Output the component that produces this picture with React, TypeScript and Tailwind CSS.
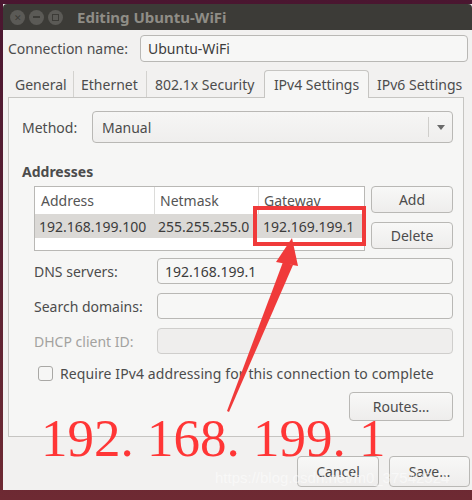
import React from "react";

const font = { fontFamily: '"Noto Sans", "Open Sans", sans-serif' };

function Btn({ children, className = "" }: { children: React.ReactNode; className?: string }) {
  return (
    <div
      className={
        "flex items-center justify-center rounded-[4px] border border-[#b9b8b5] bg-gradient-to-b from-[#f8f8f7] to-[#eeedec] text-[14px] text-[#4c4c4c] " +
        className
      }
    >
      {children}
    </div>
  );
}

function Field({ children, disabled = false, className = "" }: { children?: React.ReactNode; disabled?: boolean; className?: string }) {
  return (
    <div
      className={
        "flex items-center rounded-[4px] border px-[7px] text-[14px] " +
        (disabled ? "border-[#cfcecc] bg-[#efeeed]" : "border-[#b9b8b5] bg-[#f7f7f6] text-[#3c3c3c]") +
        " " +
        className
      }
    >
      {children}
    </div>
  );
}

export default function App() {
  return (
    <div
      className="relative h-[500px] w-[472px] overflow-hidden bg-gradient-to-b from-[#4a1630] to-[#6e2a33] pl-[3px] pt-[4px]"
      style={font}
    >
      <div className="flex h-[486px] w-[469px] flex-col bg-[#f2f1f0]">
        {/* title bar */}
        <div className="flex h-[26px] items-center rounded-t-[4px] bg-[#3c3b37] pl-[7px]">
          <div className="flex gap-[4px]">
            <div className="flex h-[15px] w-[15px] items-center justify-center rounded-full bg-[#5b5a56] text-[9px] leading-none text-[#3c3b37]">✕</div>
            <div className="flex h-[15px] w-[15px] items-center justify-center rounded-full bg-[#5b5a56]">
              <div className="h-[2px] w-[7px] bg-[#3c3b37]" />
            </div>
            <div className="flex h-[15px] w-[15px] items-center justify-center rounded-full bg-[#5b5a56]">
              <div className="h-[7px] w-[7px] border-[1.5px] border-[#3c3b37]" />
            </div>
          </div>
          <div className="ml-[14px] text-[15px] font-bold text-[#8f8d86]">Editing Ubuntu-WiFi</div>
        </div>

        {/* connection name */}
        <div className="mt-[5px] flex h-[27px] items-center pr-[4px]">
          <div className="ml-[5px] w-[132px] text-[14px] text-[#4c4c4c]">Connection name:</div>
          <Field className="h-[27px] flex-1">Ubuntu-WiFi</Field>
        </div>

        {/* tabs */}
        <div className="ml-[5px] mt-[8px] flex h-[27px] items-end text-[14px] text-[#4c4c4c]">
          <div className="flex h-[26px] w-[66px] items-center border-r border-[#d3d2cf] pl-[7px]">General</div>
          <div className="flex h-[26px] w-[73px] items-center border-r border-[#d3d2cf] pl-[7px]">Ethernet</div>
          <div className="flex h-[26px] w-[117px] items-center pl-[8px]">802.1x Security</div>
          <div className="relative z-10 -mb-px flex h-[28px] w-[105px] items-center justify-center rounded-t-[4px] border border-b-0 border-[#c6c5c2] bg-[#f6f6f5]">
            IPv4 Settings
          </div>
          <div className="flex h-[26px] w-[100px] items-center pl-[8px]">IPv6 Settings</div>
        </div>

        {/* panel */}
        <div className="ml-[5px] flex h-[340px] w-[456px] flex-col border border-[#c6c5c2] bg-[#f6f6f5] pl-[13px] pr-[10px] text-[14px] text-[#4c4c4c]">
          <div className="mt-[13px] flex h-[32px] items-center">
            <div className="w-[70px]">Method:</div>
            <div className="flex h-[32px] flex-1 items-center rounded-[4px] border border-[#b9b8b5] bg-gradient-to-b from-[#f6f6f5] to-[#efeeed] pl-[9px]">
              <span className="flex-1">Manual</span>
              <div className="flex h-[20px] w-[24px] items-center justify-center border-l border-[#cfcecb]">
                <div className="h-0 w-0 border-l-[4px] border-r-[4px] border-t-[5px] border-l-transparent border-r-transparent border-t-[#6a6a6a]" />
              </div>
            </div>
          </div>

          <div className="mt-[20px] text-[14px] font-bold leading-[18px]">Addresses</div>

          <div className="ml-[12px] mt-[5px] flex">
            <div className="flex h-[65px] w-[331px] flex-col border border-[#b9b8b5] bg-white">
              <div className="flex h-[27px] text-[#555]">
                <div className="flex w-[120px] items-center border-r border-[#dcdcda] pl-[6px]">Address</div>
                <div className="flex w-[104px] items-center border-r border-[#dcdcda] pl-[5px]">Netmask</div>
                <div className="flex flex-1 items-center pl-[5px]">Gateway</div>
              </div>
              <div className="flex h-[24px] bg-[#dbd9d6] text-[#3c3c3c]">
                <div className="flex w-[120px] items-center pl-[4px]">192.168.199.100</div>
                <div className="flex w-[104px] items-center pl-[3px]">255.255.255.0</div>
                <div className="flex flex-1 items-center pl-[4px]">192.169.199.1</div>
              </div>
            </div>
            <div className="ml-[6px] flex flex-1 flex-col gap-[9px]">
              <Btn className="h-[27px]">Add</Btn>
              <Btn className="h-[27px]">Delete</Btn>
            </div>
          </div>

          <div className="ml-[12px] mt-[7px] flex flex-col gap-[9px]">
            <div className="flex h-[26px] items-center">
              <div className="w-[123px]">DNS servers:</div>
              <Field className="h-[26px] flex-1">192.168.199.1</Field>
            </div>
            <div className="flex h-[26px] items-center">
              <div className="w-[123px]">Search domains:</div>
              <Field className="h-[26px] flex-1" />
            </div>
            <div className="flex h-[26px] items-center">
              <div className="w-[123px] text-[#a3a29f]">DHCP client ID:</div>
              <Field disabled className="h-[26px] flex-1" />
            </div>
          </div>

          <div className="ml-[16px] mt-[10px] flex h-[18px] items-center">
            <div className="h-[15px] w-[15px] rounded-[3px] border border-[#a9a8a5] bg-[#f6f6f5]" />
            <div className="ml-[7px] tracking-[0.1px]">Require IPv4 addressing for this connection to complete</div>
          </div>

          <div className="mt-[10px] flex justify-end">
            <Btn className="h-[29px] w-[104px]">Routes…</Btn>
          </div>
        </div>

        {/* bottom buttons */}
        <div className="mt-[19px] flex justify-end gap-[10px] pr-[2px]">
          <Btn className="h-[31px] w-[82px]">Cancel</Btn>
          <Btn className="h-[31px] w-[81px]">Save…</Btn>
        </div>
      </div>

      {/* annotations */}
      <div className="absolute left-[253px] top-[206px] h-[40px] w-[113px] border-[4px] border-[#f03a3a]" />
      <svg className="absolute left-0 top-0" width="472" height="500" viewBox="0 0 472 500">
        <polygon points="292,238 276,262 298,266" fill="#f03a3a" />
        <polygon points="283,262 293,265 229,412 227,411" fill="#f03a3a" />
      </svg>
      <div
        className="absolute left-[41px] top-[412px] text-[53px] leading-none text-[#ff3636]"
        style={{ fontFamily: '"Liberation Serif", "DejaVu Serif", serif' }}
      >
        192. 168. 199. 1
      </div>
      <div
        className="absolute left-[215px] top-[470px] text-[15px] leading-none text-white/50"
        style={{ fontFamily: '"Liberation Sans", sans-serif' }}
      >
        https://blog.csdn.net/m0_37542524
      </div>
    </div>
  );
}
